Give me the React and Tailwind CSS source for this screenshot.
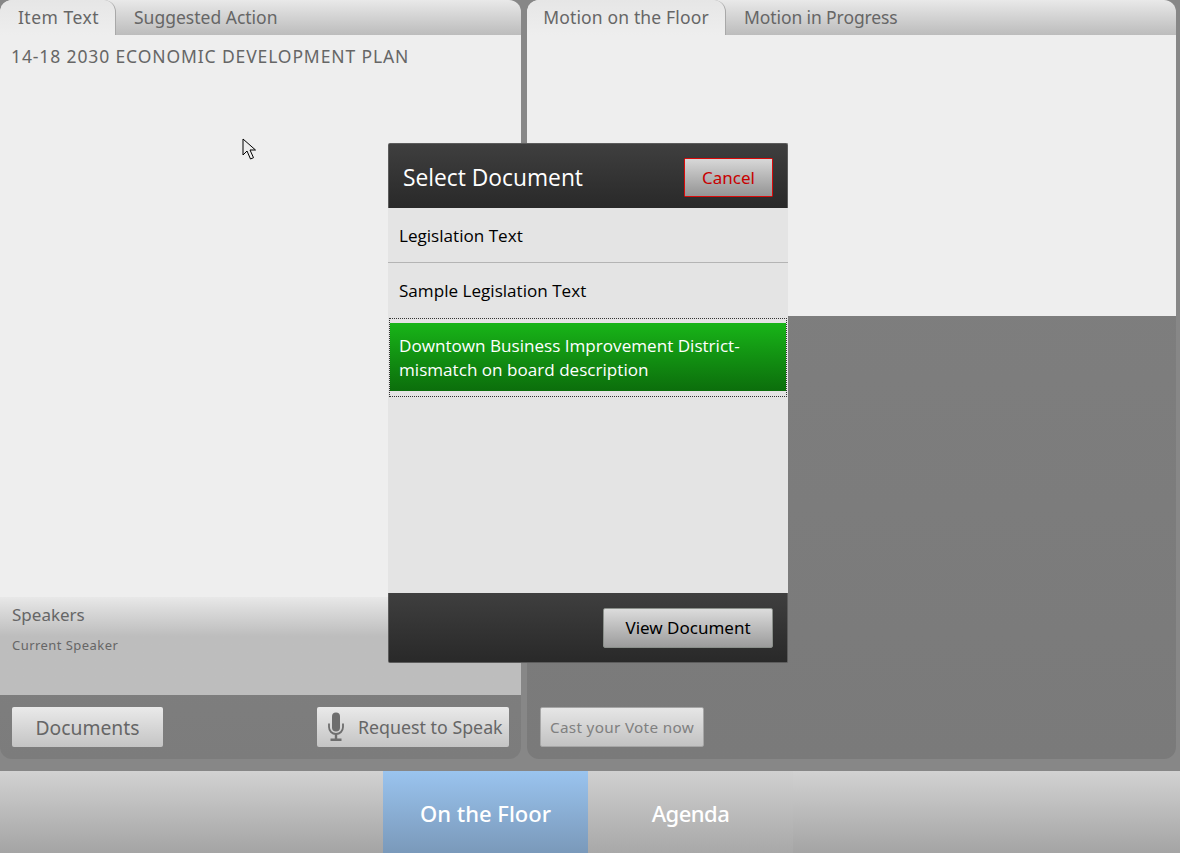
const ui = { fontFamily: '"Noto Sans", "DejaVu Sans", sans-serif' };
const seg = { fontFamily: '"Open Sans", "Noto Sans", sans-serif' };

function Tabs({ first, second, w1, t1, t2 }) {
  return (
    <div className="flex h-[35px] shrink-0 bg-gradient-to-b from-[#e9e9e9] to-[#bcbcbc] text-[17.5px] text-[#666666]">
      <div className={`${w1} ${t1} flex items-center justify-center bg-gradient-to-b from-[#e6e6e6] to-[#eeeeee] border-r border-[#a8a8a8] rounded-tr-[12px] rounded-tl-[10px]`}>
        {first}
      </div>
      <div className={`${t2} pl-[18px] flex items-center`}>{second}</div>
    </div>
  );
}

function Mic() {
  return (
    <svg width="18" height="30" viewBox="0 0 18 30" fill="none" className="shrink-0">
      <rect x="5" y="0.5" width="8" height="19" rx="4" fill="#6e6e6e" />
      <path d="M2 11.5v3.5c0 4 3 7 7 7s7-3 7-7v-3.5" stroke="#6e6e6e" strokeWidth="1.8" />
      <path d="M9 22v5" stroke="#6e6e6e" strokeWidth="2.4" />
      <rect x="3.5" y="26.5" width="11" height="2.5" fill="#6e6e6e" />
    </svg>
  );
}

export default function App() {
  return (
    <div className="relative w-[1180px] h-[853px] overflow-hidden bg-[#878787] flex flex-col" style={ui}>
      <div className="flex gap-[6px] h-[759px] pr-[4px] shrink-0">
        {/* Left panel */}
        <div className="w-[521px] flex flex-col rounded-[12px] overflow-hidden bg-gradient-to-b from-[#8c8c8c] to-[#7c7c7c]">
          <Tabs first="Item Text" second="Suggested Action" w1="w-[116px]" t1="tracking-[0.5px] pl-[2px]" t2="" />
          <div className="h-[562px] bg-[#eeeeee] px-[11px] pt-[8px] text-[17.5px] leading-[26px] tracking-[0.88px] text-[#666666]">
            14-18 2030 ECONOMIC DEVELOPMENT PLAN
          </div>
          <div className="h-[98px] bg-gradient-to-b from-[#e8e8e8] via-[#bdbdbd] via-40% to-[#bdbdbd] px-[12px] text-[#666666]">
            <div className="pt-[5px] text-[17px] leading-[26px]">Speakers</div>
            <div className="pt-[8px] text-[13px] leading-[18px] tracking-[0.45px]">Current Speaker</div>
          </div>
          <div className="flex-1 flex items-start justify-between pl-[12px] pr-[12px] pt-[12px]">
            <button className="w-[151px] h-[40px] pt-[2px] rounded-[2px] bg-gradient-to-b from-[#eaeaea] to-[#c4c4c4] text-[19.3px] text-[#666666]">
              Documents
            </button>
            <button className="w-[192px] h-[40px] rounded-[2px] bg-gradient-to-b from-[#eaeaea] to-[#c4c4c4] text-[17.8px] text-[#666666] flex items-center pl-[10px] gap-[13px] whitespace-nowrap">
              <Mic />
              Request to Speak
            </button>
          </div>
        </div>

        {/* Right panel */}
        <div className="flex-1 flex flex-col rounded-[12px] overflow-hidden bg-gradient-to-b from-[#808080] to-[#7a7a7a]">
          <Tabs first="Motion on the Floor" second="Motion in Progress" w1="w-[199px]" t1="tracking-[0.15px]" t2="tracking-[-0.1px]" />
          <div className="h-[281px] bg-[#eeeeee]" />
          <div className="flex-1 flex items-end pl-[13px] pb-[12px]">
            <button className="w-[164px] h-[40px] rounded-[2px] border border-[#a6a6a6] bg-gradient-to-b from-[#e6e6e6] to-[#c2c2c2] text-[15.3px] text-[#808080] overflow-hidden whitespace-nowrap tracking-[0.3px] text-left pl-[9px]">
              Cast your Vote now
            </button>
          </div>
        </div>
      </div>

      {/* Bottom navigation */}
      <div className="mt-[12px] h-[82px] flex justify-center pr-[4px] bg-gradient-to-b from-[#d2d2d2] to-[#a4a4a4] text-[22px] text-white font-medium">
        <div className="w-[205px] pt-[3px] flex items-center justify-center bg-gradient-to-b from-[#9ac4ef] to-[#7a99ba]">On the Floor</div>
        <div className="w-[205px] pt-[3px] tracking-[-0.5px] flex items-center justify-center bg-gradient-to-b from-[#d0d0d0] to-[#a8a8a8]">Agenda</div>
      </div>

      {/* Modal */}
      <div className="absolute left-[388px] top-[143px] w-[400px] h-[520px] flex flex-col" style={seg}>
        <div className="h-[65px] shrink-0 flex items-center justify-between pl-[14px] pr-[14px] pt-[3px] rounded-t-[2px] border-x border-t border-[#5c5c5c] bg-gradient-to-b from-[#3f3f3f] to-[#292929] text-white text-[22.8px]">
          <span className="pt-[1px]">Select Document</span>
          <button className="w-[89px] h-[39px] rounded-[1px] border border-[#d80a0a] bg-gradient-to-b from-[#d8d8d8] to-[#949494] text-[#c80000] text-[17px]" style={ui}>
            Cancel
          </button>
        </div>
        <div className="flex-1 bg-[#e4e4e4] text-[17.1px] text-black flex flex-col">
          <div className="h-[55px] shrink-0 flex items-center px-[11px] pt-[1px] border-b border-[#b4b4b4]">Legislation Text</div>
          <div className="h-[55px] shrink-0 flex items-center px-[11px] pt-[1px]">Sample Legislation Text</div>
          <div className="h-[79px] shrink-0 border border-dotted border-[#333333] ml-[1px] mr-[1px] pt-[4px] pb-[5px]">
            <div className="h-[68px] bg-gradient-to-b from-[#18b518] to-[#0c6e0c] text-white pl-[9px] pt-[1px] flex items-center leading-[24px]">
              <span>Downtown Business Improvement District-<br />mismatch on board description</span>
            </div>
          </div>
        </div>
        <div className="h-[70px] shrink-0 flex items-center justify-end pr-[14px] rounded-b-[2px] border-x border-b border-[#5c5c5c] bg-gradient-to-b from-[#3f3f3f] to-[#292929]">
          <button className="w-[170px] h-[40px] rounded-[2px] border border-[#8a8f8a] bg-gradient-to-b from-[#dcdcdc] to-[#9c9c9c] text-black text-[17px]" style={ui}>
            View Document
          </button>
        </div>
      </div>

      {/* Mouse pointer */}
      <svg width="14" height="22" viewBox="0 0 14 22" className="absolute left-[241.5px] top-[137.5px]">
        <path d="M1 1v16l4-4 3.5 8 3-1.3L8 12h5.5z" fill="#eeeeee" stroke="#000000" strokeWidth="1" />
      </svg>
    </div>
  );
}
